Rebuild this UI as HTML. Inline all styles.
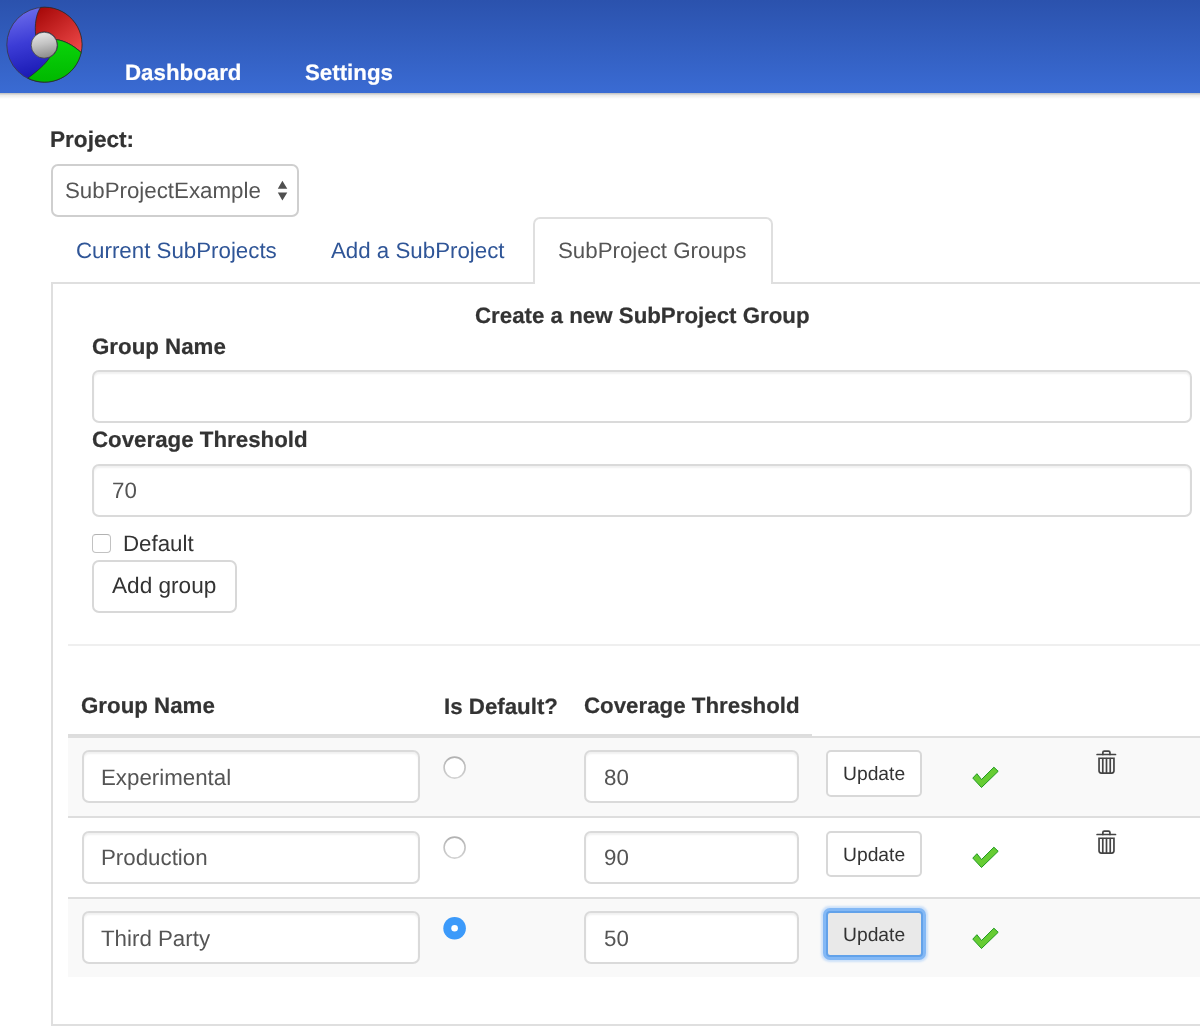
<!DOCTYPE html>
<html><head><meta charset="utf-8">
<style>
html,body{margin:0;padding:0}
body{width:1200px;height:1033px;overflow:hidden;background:#fff;position:relative;font-family:"Liberation Sans",sans-serif;color:#333}
.a{position:absolute}
.t{position:absolute;white-space:nowrap;line-height:1;will-change:transform;text-rendering:geometricPrecision}
.b{font-weight:bold;-webkit-text-stroke:0.2px currentColor}
#hdr{left:0;top:0;width:1200px;height:93px;background:linear-gradient(#2b52ad,#3a6bd3)}
#hsh{left:0;top:93px;width:1200px;height:6px;background:linear-gradient(rgba(0,0,0,.26),rgba(0,0,0,.08) 40%,rgba(0,0,0,0))}
.nav{color:#fff;font-weight:bold;-webkit-text-stroke:0.2px currentColor}
.inp{position:absolute;box-sizing:border-box;border:2px solid #dadada;border-radius:7px;background:#fff;box-shadow:inset 0 2px 2px rgba(0,0,0,.06)}
.btn{position:absolute;box-sizing:border-box;border:2px solid #d8d8d8;border-radius:7px;background:#fff}
.txt{color:#555}
.lnk{color:#2f5597}
</style></head><body>
<svg class="a" width="0" height="0" style="left:0;top:0"><defs><linearGradient id="rg" x1="0" y1="0" x2="0" y2="1"><stop offset="0" stop-color="#b2b2b2"/><stop offset="1" stop-color="#d2d2d2"/></linearGradient></defs></svg>
<div id="hdr" class="a"></div>
<div id="hsh" class="a"></div>
<svg class="a" style="left:0;top:0" width="90" height="90" viewBox="0 0 90 90">
<defs>
<linearGradient id="gb" x1="0" y1="0" x2="0.25" y2="1"><stop offset="0" stop-color="#7474ee"/><stop offset="0.5" stop-color="#3c3cd6"/><stop offset="1" stop-color="#1616b0"/></linearGradient>
<linearGradient id="gr" x1="0.1" y1="0" x2="0.9" y2="1"><stop offset="0" stop-color="#a60808"/><stop offset="1" stop-color="#ee4848"/></linearGradient>
<linearGradient id="gg" x1="0" y1="0" x2="0" y2="1"><stop offset="0" stop-color="#0ad40a"/><stop offset="1" stop-color="#00b800"/></linearGradient>
<linearGradient id="gs" x1="0.3" y1="0" x2="0.5" y2="1"><stop offset="0" stop-color="#e8e8e8"/><stop offset="0.45" stop-color="#c4c4c4"/><stop offset="1" stop-color="#8c8c8c"/></linearGradient>
</defs>
<circle cx="44.3" cy="44.8" r="37.5" fill="url(#gb)" stroke="#3a3a50" stroke-width="0.9"/>
<path d="M40.6,7.4 A37.5,37.5 0 0 1 81.2,52.6 C73,45 64,40.5 56.2,39.6 A13.2,13.2 0 0 0 35.7,35.1 C34.5,25 36,14 40.6,7.4 Z" fill="url(#gr)" stroke="#2a2a2a" stroke-width="0.8"/>
<path d="M81.2,52.6 A37.5,37.5 0 0 1 27.8,78.2 C36,72 45,65 49.8,57.2 A13.2,13.2 0 0 0 56.2,39.6 C64,40.5 73,45 81.2,52.6 Z" fill="url(#gg)" stroke="#2a2a2a" stroke-width="0.8"/>
<circle cx="44.2" cy="45.2" r="13" fill="url(#gs)" stroke="#3a3a3a" stroke-width="0.7"/>
</svg>
<div class="t nav" style="left:124.90px;top:61.52px;font-size:22.3px;">Dashboard</div>
<div class="t nav" style="left:305.20px;top:61.52px;font-size:22.3px;">Settings</div>
<div class="t b" style="left:50.30px;top:129.47px;font-size:22.6px;">Project:</div>
<div class="inp" style="left:51px;top:164px;width:248px;height:52.5px;box-shadow:none;border-color:#cfcfcf"></div>
<div class="t txt" style="left:64.70px;top:180.32px;font-size:22.3px;">SubProjectExample</div>
<svg class="a" style="left:276px;top:180px" width="14" height="22" viewBox="0 0 14 22"><path d="M1.8,8.8 L6.4,0.7 L11.3,8.8 Z M1.8,12.5 L6.4,20.4 L11.3,12.5 Z" fill="#505050"/></svg>
<div class="a" style="left:51px;top:282px;width:1160px;height:744px;border:2px solid #dfdfdf;box-sizing:border-box"></div>
<div class="a" style="left:533px;top:217.3px;width:240px;height:67px;border:2px solid #dfdfdf;border-bottom:none;border-radius:7px 7px 0 0;background:#fff;box-sizing:border-box"></div>
<div class="t lnk" style="left:76.30px;top:239.52px;font-size:22.3px;">Current SubProjects</div>
<div class="t lnk" style="left:330.50px;top:239.52px;font-size:22.3px;">Add a SubProject</div>
<div class="t txt" style="left:557.70px;top:239.52px;font-size:22.3px;">SubProject Groups</div>
<div class="t b" style="left:474.60px;top:304.62px;font-size:22.3px;">Create a new SubProject Group</div>
<div class="t b" style="left:91.90px;top:335.62px;font-size:22.3px;">Group Name</div>
<div class="inp" style="left:92px;top:370.3px;width:1100px;height:53px"></div>
<div class="t b" style="left:91.70px;top:428.92px;font-size:22.3px;">Coverage Threshold</div>
<div class="inp" style="left:92px;top:463.5px;width:1100px;height:53px"></div>
<div class="t txt" style="left:112.00px;top:479.62px;font-size:22.3px;">70</div>
<div class="a" style="left:92.2px;top:534.1px;width:18.7px;height:18.9px;box-sizing:border-box;border:1.5px solid #c2c2c2;border-top-color:#b2b2b2;border-radius:4px;background:#fff"></div>
<div class="t " style="left:122.80px;top:532.62px;font-size:22.3px;">Default</div>
<div class="btn" style="left:92px;top:559.5px;width:145px;height:53px"></div>
<div class="t " style="left:112.00px;top:574.62px;font-size:22.6px;">Add group</div>
<div class="a" style="left:68px;top:644px;width:1140px;height:2px;background:#efefef"></div>
<div class="t b" style="left:80.90px;top:695.12px;font-size:22.3px;">Group Name</div>
<div class="t b" style="left:444.00px;top:695.82px;font-size:22.3px;">Is Default?</div>
<div class="t b" style="left:584.00px;top:695.12px;font-size:22.3px;">Coverage Threshold</div>
<div class="a" style="left:68px;top:734px;width:744px;height:3px;background:#ddd"></div>
<div class="a" style="left:0;top:735.8px;width:1200px;height:81px">
<div class="a" style="left:68px;top:0;width:1140px;height:80.5px;box-sizing:border-box;border-top:2px solid #dedede;background:#f9f9f9"></div>
<div class="inp" style="left:81.7px;top:14.3px;width:338px;height:53px"></div>
<div class="t txt" style="left:100.75px;top:30.82px;font-size:22.3px;">Experimental</div>
<svg class="a" style="left:440px;top:17px" width="30" height="30" viewBox="0 0 30 30"><circle cx="14.6" cy="14.6" r="10.5" fill="#fff" stroke="url(#rg)" stroke-width="1.6"/></svg>
<div class="inp" style="left:584.3px;top:14.5px;width:215px;height:53px"></div>
<div class="t txt" style="left:604.00px;top:30.82px;font-size:22.3px;">80</div>
<div class="btn" style="left:825.7px;top:14.7px;width:96.4px;height:46.3px;border-radius:5px"></div>
<div class="t " style="left:843.00px;top:29.26px;font-size:19.3px;">Update</div>
<svg class="a" style="left:960px;top:20px" width="50" height="40" viewBox="960 20 50 40"><path d="M972.8,42.1 L976.9,37.7 L981.5,43.5 L993.9,31.2 L998.2,35.3 L981.5,51.5 Z" fill="#66cc33" stroke="#1f9a1f" stroke-width="1" stroke-linejoin="round"/></svg>
<svg class="a" style="left:1090px;top:12px" width="32" height="32" viewBox="0 0 32 32"><g fill="none" stroke="#444" stroke-width="1.7" stroke-linecap="round"><path d="M7.1,6.5 H25.5"/><path d="M12.85,6.5 V4.6 Q12.85,3.05 14.4,3.05 H18.4 Q19.95,3.05 19.95,4.6 V6.5"/><path d="M9.05,10.25 V22.8 Q9.05,25.05 11.3,25.05 H21.7 Q23.95,25.05 23.95,22.8 V10.25 Z"/><path d="M12.78,10.6 V24.6 M16.5,10.6 V24.6 M20.23,10.6 V24.6"/></g></svg>
</div>
<div class="a" style="left:0;top:816.3px;width:1200px;height:81px">
<div class="a" style="left:68px;top:0;width:1140px;height:80.5px;box-sizing:border-box;border-top:2px solid #dedede;background:#fff"></div>
<div class="inp" style="left:81.7px;top:14.3px;width:338px;height:53px"></div>
<div class="t txt" style="left:100.75px;top:30.82px;font-size:22.3px;">Production</div>
<svg class="a" style="left:440px;top:17px" width="30" height="30" viewBox="0 0 30 30"><circle cx="14.6" cy="14.6" r="10.5" fill="#fff" stroke="url(#rg)" stroke-width="1.6"/></svg>
<div class="inp" style="left:584.3px;top:14.5px;width:215px;height:53px"></div>
<div class="t txt" style="left:604.00px;top:30.82px;font-size:22.3px;">90</div>
<div class="btn" style="left:825.7px;top:14.7px;width:96.4px;height:46.3px;border-radius:5px"></div>
<div class="t " style="left:843.00px;top:29.26px;font-size:19.3px;">Update</div>
<svg class="a" style="left:960px;top:20px" width="50" height="40" viewBox="960 20 50 40"><path d="M972.8,42.1 L976.9,37.7 L981.5,43.5 L993.9,31.2 L998.2,35.3 L981.5,51.5 Z" fill="#66cc33" stroke="#1f9a1f" stroke-width="1" stroke-linejoin="round"/></svg>
<svg class="a" style="left:1090px;top:12px" width="32" height="32" viewBox="0 0 32 32"><g fill="none" stroke="#444" stroke-width="1.7" stroke-linecap="round"><path d="M7.1,6.5 H25.5"/><path d="M12.85,6.5 V4.6 Q12.85,3.05 14.4,3.05 H18.4 Q19.95,3.05 19.95,4.6 V6.5"/><path d="M9.05,10.25 V22.8 Q9.05,25.05 11.3,25.05 H21.7 Q23.95,25.05 23.95,22.8 V10.25 Z"/><path d="M12.78,10.6 V24.6 M16.5,10.6 V24.6 M20.23,10.6 V24.6"/></g></svg>
</div>
<div class="a" style="left:0;top:896.8px;width:1200px;height:81px">
<div class="a" style="left:68px;top:0;width:1140px;height:80px;box-sizing:border-box;border-top:2px solid #dedede;background:#f9f9f9"></div>
<div class="inp" style="left:81.7px;top:14.3px;width:338px;height:53px"></div>
<div class="t txt" style="left:100.75px;top:30.82px;font-size:22.3px;">Third Party</div>
<svg class="a" style="left:440px;top:17px" width="30" height="30" viewBox="0 0 30 30"><circle cx="14.6" cy="14.3" r="11.3" fill="#3c9afa"/><circle cx="14.6" cy="14.3" r="3.3" fill="#fff"/></svg>
<div class="inp" style="left:584.3px;top:14.5px;width:215px;height:53px"></div>
<div class="t txt" style="left:604.00px;top:30.82px;font-size:22.3px;">50</div>
<div class="a" style="left:825.6px;top:14.6px;width:97.5px;height:45.6px;box-sizing:border-box;border:2.5px solid #62a2ea;border-radius:4px;background:#e9e9e9;box-shadow:0 0 0 3px rgba(118,176,244,.85),0 0 2px 4.2px rgba(140,190,250,.4)"></div>
<div class="t " style="left:843.00px;top:29.26px;font-size:19.3px;">Update</div>
<svg class="a" style="left:960px;top:20px" width="50" height="40" viewBox="960 20 50 40"><path d="M972.8,42.1 L976.9,37.7 L981.5,43.5 L993.9,31.2 L998.2,35.3 L981.5,51.5 Z" fill="#66cc33" stroke="#1f9a1f" stroke-width="1" stroke-linejoin="round"/></svg>
</div>
</body></html>
